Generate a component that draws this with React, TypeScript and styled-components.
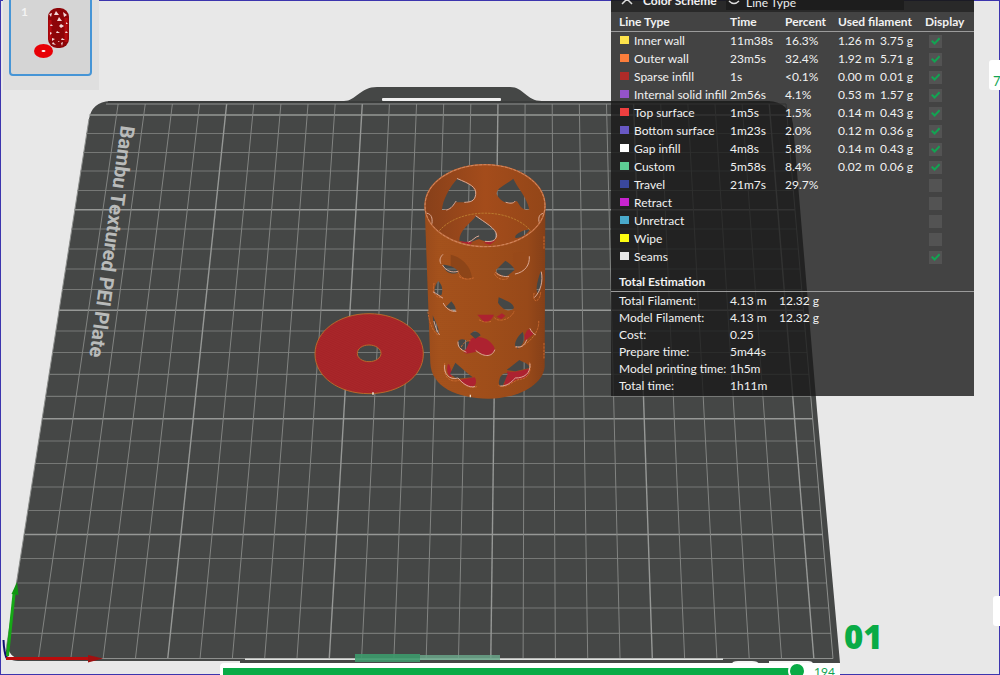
import React from "react";
import styled, { createGlobalStyle } from "styled-components";

const GlobalStyle = createGlobalStyle`
  *, *::before, *::after { box-sizing: border-box; }
  body { margin: 0; background: #e8e8e8; font-family: Lato, "Noto Sans", sans-serif; }
`;

const Page = styled.div`
  position: relative;
  display: grid;
  min-height: 100vh;
  overflow: hidden;
  background: #e8e8e8;
  &::after {
    content: "";
    position: absolute;
    inset: 0;
    border: 1px solid #3c35ae;
    pointer-events: none;
  }
`;

const Scene = styled.svg`
  grid-area: 1 / 1;
  display: block;
  width: 100%;
  height: 100%;
  min-height: 100vh;
`;

const Overlay = styled.div`
  grid-area: 1 / 1;
  display: grid;
  grid-template-rows: 1fr auto;
  z-index: 1;
`;

const Main = styled.main`
  display: flex;
  align-items: flex-start;
  padding-left: 3px;
`;

const PlateList = styled.nav`
  background: #dfdfdf;
  padding: 0 7px 14px 6px;
  margin-right: auto;
`;

const PlateButton = styled.button`
  display: block;
  width: 83px;
  height: 82px;
  margin-top: -6px;
  padding: 0;
  border: 2px solid #4695d6;
  border-radius: 4px;
  background: #d5d5d5;
`;

const PlateArt = styled.svg`
  display: block;
  width: 79px;
  height: 78px;
`;

const Panel = styled.section`
  width: 363px;
  margin-right: 15px;
  padding-bottom: 2px;
  background: rgba(25, 25, 25, 0.8);
  color: #f1f1f1;
  font-size: 12px;
`;

const PanelHeader = styled.header`
  display: flex;
  align-items: center;
  height: 24px;
  margin-top: -12px;
  padding-left: 9px;
  background: rgba(25, 25, 25, 0.6);
`;

const Collapse = styled.button`
  width: 14px;
  height: 24px;
  padding: 0;
  border: 0;
  background: none;
  color: #ddd;
`;

const SchemeLabel = styled.label`
  width: 83px;
  margin-left: 9px;
  font-weight: 700;
`;

const SelectWrap = styled.div`
  display: flex;
  align-items: center;
  width: 178px;
  height: 20px;
  padding: 4px 0 0 2px;
  background: #1d1d1d;
`;

const SchemeSelect = styled.select`
  flex: 1;
  appearance: none;
  padding: 0 0 0 6px;
  border: 0;
  background: none;
  color: #eee;
  font: inherit;
`;

const LineTable = styled.table`
  width: 100%;
  table-layout: fixed;
  border-collapse: separate;
  border-spacing: 0;
`;

const HeadCell = styled.th<{ $w: number; $first?: boolean }>`
  width: ${(p) => p.$w}px;
  height: 20px;
  padding: 0 0 0 ${(p) => (p.$first ? 8 : 0)}px;
  border-bottom: 1px solid #9b9b9b;
  text-align: left;
  font-weight: 700;
  line-height: 18px;
  white-space: nowrap;
`;

const Cell = styled.td`
  height: 18px;
  padding: 0;
  line-height: 18px;
  white-space: nowrap;
`;

const NameCell = styled.th`
  height: 18px;
  padding: 0 0 0 9px;
  text-align: left;
  font-weight: 400;
  line-height: 18px;
  white-space: nowrap;
`;

const Swatch = styled.span<{ $color: string }>`
  display: inline-block;
  width: 9px;
  height: 8px;
  margin-right: 5px;
  vertical-align: 1px;
  background: ${(p) => p.$color};
`;

const Amount = styled.span`
  display: inline-block;
  width: 42px;
`;

const Tick = styled.input`
  appearance: none;
  display: block;
  width: 13px;
  height: 13px;
  margin: 0 0 0 4px;
  background: #535353;
  &:checked::before {
    content: "";
    display: block;
    width: 13px;
    height: 13px;
    background: #12a452;
    clip-path: polygon(15% 52%, 27% 42%, 43% 58%, 76% 23%, 87% 35%, 43% 81%);
  }
`;

const TotalTitle = styled.h2`
  margin: 0;
  padding: 7px 0 0 8px;
  border-bottom: 1px solid #9b9b9b;
  font-size: 12px;
  line-height: 18px;
`;

const Totals = styled.dl`
  margin: 0;
  padding: 0 0 0 8px;
`;

const TotalRow = styled.div`
  display: grid;
  grid-template-columns: 111px 49px 1fr;
  line-height: 17px;
`;

const Term = styled.dt`
  white-space: nowrap;
`;

const Value = styled.dd`
  margin: 0;
`;

const Rail = styled.aside`
  display: flex;
  flex-direction: column;
  align-items: flex-end;
  justify-content: space-between;
  align-self: stretch;
  width: 11px;
  padding: 60px 0 37px;
`;

const RailTag = styled.div<{ $w: number }>`
  width: ${(p) => p.$w}px;
  height: 30px;
  padding-left: 4px;
  overflow: hidden;
  border-radius: 3px 0 0 3px;
  background: #fff;
  color: #12a452;
  font-size: 13px;
  line-height: 43px;
`;

const Footer = styled.footer`
  display: flex;
  align-items: flex-start;
  height: 12px;
  margin: 0 16% 0 22%;
  overflow: hidden;
  border-radius: 4px 0 0 0;
  background: #fff;
`;

const MoveSlider = styled.input`
  appearance: none;
  flex: 1;
  min-width: 0;
  height: 16px;
  margin: 0 8px 0 3px;
  background: linear-gradient(#09ab46, #09ab46) 0 5px / 99% 8px no-repeat;
  &::-webkit-slider-thumb {
    appearance: none;
    width: 18px;
    height: 18px;
    border: 2px solid #fff;
    border-radius: 50%;
    background: #09ab46;
  }
`;

const MoveCount = styled.output`
  width: 26px;
  color: #12a452;
  font-size: 12px;
  line-height: 18px;
`;

type Row = [string, string, string, string, string, string, boolean];
const rows: Row[] = [
  ["Inner wall", "#fde34b", "11m38s", "16.3%", "1.26 m", "3.75 g", true],
  ["Outer wall", "#fb7d3b", "23m5s", "32.4%", "1.92 m", "5.71 g", true],
  ["Sparse infill", "#ae2b28", "1s", "<0.1%", "0.00 m", "0.01 g", true],
  ["Internal solid infill", "#9453c8", "2m56s", "4.1%", "0.53 m", "1.57 g", true],
  ["Top surface", "#ee3f3f", "1m5s", "1.5%", "0.14 m", "0.43 g", true],
  ["Bottom surface", "#6858c4", "1m23s", "2.0%", "0.12 m", "0.36 g", true],
  ["Gap infill", "#ffffff", "4m8s", "5.8%", "0.14 m", "0.43 g", true],
  ["Custom", "#5dcd95", "5m58s", "8.4%", "0.02 m", "0.06 g", true],
  ["Travel", "#3a489d", "21m7s", "29.7%", "", "", false],
  ["Retract", "#c824cf", "", "", "", "", false],
  ["Unretract", "#49a9cb", "", "", "", "", false],
  ["Wipe", "#fcfc10", "", "", "", "", false],
  ["Seams", "#e6e6e6", "", "", "", "", true],
];

const totals: [string, string, string][] = [
  ["Total Filament:", "4.13 m", "12.32 g"],
  ["Model Filament:", "4.13 m", "12.32 g"],
  ["Cost:", "0.25", ""],
  ["Prepare time:", "5m44s", ""],
  ["Model printing time:", "1h5m", ""],
  ["Total time:", "1h11m", ""],
];

const gridYs = [
  115, 133.5, 152.5, 171, 190.5, 209.7, 229, 249, 269, 289.5, 310.3, 331, 352.5, 374.3, 396.3,
  418.7, 441, 463.5, 487, 510.5, 534.5, 558.5, 583, 608, 633.3,
];

/* Perspective grid of the build plate; every fifth line is stronger. */
function PlateGrid() {
  const columns = Array.from({ length: 25 }, (_, i) => i + 1);
  return (
    <g fill="none">
      {gridYs.map((y, i) => {
        const t = (y - 104) / 554;
        return (
          <path
            key={y}
            d={`M${91 - 85 * t} ${y}H${786 + 47 * t}`}
            strokeWidth={i % 5 === 0 ? 1.5 : 1.2}
            stroke={i % 5 === 0 ? "#969896" : "#767876"}
          />
        );
      })}
      {columns.map((n) => (
        <path
          key={n}
          d={`M${91 + 27.13 * n} 104L${6.3 + 32.3 * n} 658`}
          strokeWidth={n % 5 === 0 ? 1.4 : 1}
          stroke={n % 5 === 0 ? "#969896" : "#828482"}
        />
      ))}
      <path d="M106 104H786L833 658.500H20" stroke="#8d8f8d" />
    </g>
  );
}

const holes = [
  "M472 86C496 98 530 108 527 136C521 163 492 156 468 157C460 164 455 180 426 180C427 150 450 110 472 86Z",
  "M640 86C650 110 680 140 688 178C665 184 660 165 650 153C630 164 602 160 590 132C590 112 620 104 640 86Z",
  "M528 198C550 216 590 232 590 258C584 280 560 278 538 268C525 268 522 282 478 272C478 240 510 222 528 198Z",
  "M646 258C655 246 675 240 690 238C680 255 660 266 646 264Z",
  "M428 344C445 344 466 350 476 366C460 376 436 370 428 344Z",
  "M616 332C628 340 642 350 644 360C632 368 622 382 610 380C602 370 590 374 588 360Z",
  "M415 393C426 404 430 418 424 436L404 432C402 414 406 404 415 393Z",
  "M722 364C730 380 728 405 716 430C706 430 708 404 722 364Z",
  "M596 442C618 452 640 458 642 474C634 484 612 486 594 458Z",
  "M438 470L454 454C462 464 470 474 466 486Z",
  "M398 496C406 515 416 530 417 550C405 550 400 526 398 496Z",
  "M524 542C532 546 540 550 542 556L526 566L510 552Z",
  "M474 574C480 564 494 566 508 576L498 598C486 604 474 598 474 574Z",
  "M668 546C676 560 674 582 654 596C638 594 644 566 668 546Z",
  "M466 638C482 652 500 668 518 682L470 686L450 672Z",
  "M658 630C672 638 690 642 688 654L646 664L620 660Z",
  "M598 690C602 672 614 668 624 670L608 708C598 712 594 700 598 690Z",
];

const redPatches = [
  "M532 494H582C576 508 566 517 552 516Z",
  "M590 500L606 490L616 497L604 508Z",
  "M508 572C520 556 546 560 560 568C574 578 586 590 584 602C570 620 550 622 536 604C520 606 500 616 492 606Z",
  "M674 556C684 528 692 538 700 552L674 574Z",
  "M444 642C438 660 442 676 454 682L456 668L448 644Z",
  "M478 690L524 682C532 694 528 708 516 711C500 712 488 702 478 690Z",
  "M622 664C650 668 664 660 688 656C690 674 676 686 656 688C640 690 632 706 612 706Z",
  "M480 276C494 268 506 268 518 274L510 284Z",
  "M550 278L588 270L570 284Z",
];

const pale = [
  "M472 86C510 102 530 110 527 134C524 155 510 156 494 157",
  "M468 154C460 164 456 176 440 180",
  "M645 154C640 162 628 160 618 157",
  "M528 198C552 216 590 236 590 256C588 274 572 276 556 274",
  "M536 258C524 260 520 272 506 276",
  "M382 190C394 192 398 204 396 220",
  "M730 190C716 192 714 206 718 218",
  "M428 314C420 322 418 330 422 340",
  "M428 346C438 362 454 370 474 364",
  "M688 320C690 344 676 366 646 372",
  "M588 368C596 378 612 380 626 380",
  "M724 366C730 392 722 424 704 442",
  "M400 426C410 430 420 440 428 444",
  "M430 460C438 476 452 486 468 484",
  "M402 514C406 530 412 546 418 554",
  "M474 576C472 596 490 602 498 606",
  "M528 602C548 620 576 624 584 600",
  "M648 590C664 594 672 588 680 570",
  "M690 536C694 544 700 552 706 554",
  "M434 646C430 670 448 692 474 684C490 702 506 714 524 710",
  "M690 642C692 672 672 684 646 684C632 698 622 708 602 708",
];

const ochre = [
  "M478 380C494 390 508 388 520 384",
  "M474 366C478 374 484 384 496 386",
  "M584 372C590 386 608 392 622 386",
  "M584 504C600 520 636 504 642 484",
  "M538 510C550 516 560 518 574 514",
  "M384 486C388 520 400 548 416 556",
  "M402 400C396 426 408 446 424 442",
  "M702 430C696 462 720 458 722 426",
  "M484 600C478 592 496 570 510 572",
  "M646 592C660 600 720 560 716 512",
  "M434 640C428 684 452 700 480 690C492 708 514 716 530 710",
  "M596 706C616 720 640 690 660 688C690 684 694 658 688 636",
  "M732 260V296",
  "M732 580V624",
];

const discOutline =
  "M207 491C298 491 370 544 370 612C370 680 298 731 207 731S45 680 45 612C45 544 116 491 207 491ZM207 585C187 585 172 596 172 610S187 635 207 635S243 624 243 610S227 585 207 585Z";

function Disc() {
  return (
    <g fillRule="evenodd">
      <path d={discOutline} fill="#a52327" />
      <path d={discOutline} fill="url(#weave)" stroke="#b8682a" strokeWidth="3" />
      <path d="M219 727v7" stroke="#eadcc8" strokeWidth="5" />
    </g>
  );
}

function Cylinder() {
  return (
    <g>
      <g mask="url(#cutouts)">
        <path
          d="M374 167C374 100 450 43 555 43S736 100 736 167L734 650C730 700 660 746 565 746S394 710 391 640Z"
          fill="url(#wall)"
        />
        <ellipse cx="555" cy="167" rx="181" ry="124" fill="url(#inside)" />
        <path
          d="M374 167L391 640C394 710 470 746 565 746S730 700 734 650L736 167C736 240 660 291 555 291S374 240 374 167Z"
          fill="url(#layers)"
        />
        <path d="M452 314C480 320 512 344 516 382C500 392 484 384 474 366L452 350Z" fill="#8d4518" />
        <path d="M640 310C660 304 684 306 688 322C688 350 672 368 648 372L640 356Z" fill="#984919" />
        {redPatches.map((d) => (
          <path key={d} d={d} fill="#ad2230" />
        ))}
      </g>
      <path d="M418 242C480 172 630 172 692 242" fill="none" stroke="#b9782d" strokeWidth="3" strokeDasharray="7 3" />
      <g fill="none" strokeLinecap="round">
        {ochre.map((d) => (
          <path key={d} d={d} stroke="#c8682f" strokeWidth="3" strokeDasharray="5 5" />
        ))}
        {pale.map((d) => (
          <path key={d} d={d} stroke="#dba994" strokeWidth="3" />
        ))}
      </g>
      <ellipse cx="555" cy="167" rx="180" ry="123" fill="none" stroke="#bf6a3c" strokeWidth="4" />
      <ellipse cx="555" cy="167" rx="180" ry="123" fill="none" stroke="#dd9a74" strokeWidth="2" strokeDasharray="8 5" />
      <path d="M511 734v8" stroke="#eadcc8" strokeWidth="4" />
    </g>
  );
}

function Viewport() {
  return (
    <Scene viewBox="0 0 1000 675" preserveAspectRatio="xMinYMin slice" role="img" aria-label="Sliced model on build plate">
      <defs>
        <linearGradient id="wall" x1="0" x2="1">
          <stop offset="0" stopColor="#9a4b1b" />
          <stop offset=".12" stopColor="#a5521c" />
          <stop offset=".5" stopColor="#a04e1a" />
          <stop offset=".85" stopColor="#984919" />
          <stop offset="1" stopColor="#843f18" />
        </linearGradient>
        <linearGradient id="inside" x1="0" x2="1">
          <stop offset="0" stopColor="#87401a" />
          <stop offset=".5" stopColor="#a44c1b" />
          <stop offset="1" stopColor="#934618" />
        </linearGradient>
        <pattern id="layers" width="6" height="6" patternUnits="userSpaceOnUse">
          <path d="M0 1H6" stroke="#8a4316" strokeOpacity=".3" />
        </pattern>
        <pattern id="weave" width="6" height="6" patternUnits="userSpaceOnUse" patternTransform="rotate(25)">
          <path d="M0 1H6" stroke="#c03a3c" strokeOpacity=".5" />
        </pattern>
        <mask id="cutouts" maskUnits="userSpaceOnUse" x="300" y="0" width="500" height="800">
          <rect x="300" width="500" height="800" fill="#fff" />
          {holes.map((d) => (
            <path key={d} d={d} />
          ))}
        </mask>
      </defs>
      <path
        d="M89 119Q92 102 110 101H344C356 101 360 87 377 87H510C524 87 526 101 542 101H768Q790 102 793 124L817 410L840 663H240V661H18Q5 660 6 650Z"
        fill="#454746"
      />
      <path d="M108 102H770" stroke="#373938" strokeWidth="1.500" />
      <path d="M89 119L6 650" stroke="#8d8f8d" />
      <rect x="382" y="98" width="119" height="3" rx="1" fill="#f0f0f0" />
      <PlateGrid />
      <text
        transform="translate(121 125) rotate(97.800)"
        fill="#b9bbba"
        fontFamily="Roboto, sans-serif"
        fontSize="20"
        fontWeight="700"
      >
        Bambu Textured PEI Plate
      </text>
      <g transform="translate(300 150) scale(.33333)">
        <Disc />
        <Cylinder />
      </g>
      <path d="M8 648Q10 656 17 658H8Z" fill="#f2f2f2" />
      <path d="M3.500 640Q4 652 6.500 658" stroke="#101070" strokeWidth="2" fill="none" />
      <path d="M7.500 656L14 594" stroke="#16a816" strokeWidth="3" />
      <path d="M11.500 594L17 582L18.500 595Z" fill="#0f960f" />
      <path d="M6 658.500H90" stroke="#b90c0c" strokeWidth="3" />
      <path d="M88 655L103 658.500L88 662.500Z" fill="#a01010" />
      <path d="M245 659.300H723" stroke="#dfe1df" strokeWidth="1.500" />
      <path d="M732 664Q732 661 738 661H752Q758 661 759 664ZM769 661H808Q813 661 813 664H769Z" fill="#f4f4f4" />
      <path d="M355 654h65v8h-65z" fill="#3c9a6c" fillOpacity=".9" />
      <path d="M420 655h80v5h-80z" fill="#6aa68a" fillOpacity=".85" />
      <text x="844" y="649" fill="#09ab46" fontFamily="'Open Sans', sans-serif" fontSize="33" fontWeight="800">
        01
      </text>
    </Scene>
  );
}

function PlateThumbnail() {
  return (
    <PlateArt viewBox="11 -4 79 78" aria-hidden="true">
      <text x="21" y="16" fill="#f3f3f3" fontFamily="Lato, sans-serif" fontSize="12" fontWeight="700">
        1
      </text>
      <rect x="48" y="8" width="21" height="40" rx="9" fill="#8d0508" />
      <path d="M50 20V40M66 18V42" stroke="#b60a0f" strokeWidth="3" />
      <path
        d="M56 11l3 4h-5zM63 12l4 3-3 2zM49 14l3-1-1 4zM59 17l3 4h-5zM51 24l2 2h-3zM61 24l3 2-3 2-2-2zM66 22l2 2h-2zM57 31l3 2h-4zM50 32l2 1-2 2zM66 31l2 2h-3zM52 38l3 1-3 2zM62 38l3 2h-4zM53 42l3 3-4-1zM61 43l2-1-1 4zM58 41l2 1h-2z"
        fill="#f4d9d9"
      />
      <ellipse cx="43.500" cy="51" rx="9.500" ry="7" fill="#e80006" />
      <ellipse cx="43.500" cy="51" rx="2" ry="1" fill="#fff" />
    </PlateArt>
  );
}

export default function App() {
  return (
    <Page>
      <GlobalStyle />
      <Viewport />
      <Overlay>
        <Main>
          <PlateList aria-label="Plates">
            <PlateButton aria-label="Plate 1">
              <PlateThumbnail />
            </PlateButton>
          </PlateList>
          <Panel>
            <PanelHeader>
              <Collapse aria-label="Collapse">
                <svg width="14" height="24" viewBox="0 0 14 24" fill="none" stroke="currentColor" strokeWidth="1.500">
                  <path d="M2 16L7 11L12 16" />
                </svg>
              </Collapse>
              <SchemeLabel htmlFor="scheme">Color Scheme</SchemeLabel>
              <SelectWrap>
                <svg width="12" height="12" viewBox="0 0 12 12" fill="none" stroke="#ddd" strokeWidth="1.500">
                  <path d="M1 5Q6 10 11 5" />
                </svg>
                <SchemeSelect id="scheme" defaultValue="Line Type">
                  <option>Line Type</option>
                </SchemeSelect>
              </SelectWrap>
            </PanelHeader>
            <LineTable>
              <thead>
                <tr>
                  <HeadCell $w={119} $first>Line Type</HeadCell>
                  <HeadCell $w={55}>Time</HeadCell>
                  <HeadCell $w={53}>Percent</HeadCell>
                  <HeadCell $w={87}>Used filament</HeadCell>
                  <HeadCell $w={49}>Display</HeadCell>
                </tr>
              </thead>
              <tbody>
                {rows.map(([name, color, time, percent, meters, grams, shown]) => (
                  <tr key={name}>
                    <NameCell scope="row">
                      <Swatch $color={color} />
                      {name}
                    </NameCell>
                    <Cell>{time}</Cell>
                    <Cell>{percent}</Cell>
                    <Cell>
                      {meters && <Amount>{meters}</Amount>}
                      {grams}
                    </Cell>
                    <Cell>
                      <Tick type="checkbox" defaultChecked={shown} aria-label={`Display ${name}`} />
                    </Cell>
                  </tr>
                ))}
              </tbody>
            </LineTable>
            <TotalTitle>Total Estimation</TotalTitle>
            <Totals>
              {totals.map(([term, first, second]) => (
                <TotalRow key={term}>
                  <Term>{term}</Term>
                  <Value>{first}</Value>
                  {second && <Value>{second}</Value>}
                </TotalRow>
              ))}
            </Totals>
          </Panel>
          <Rail>
            <RailTag $w={11}>7</RailTag>
            <RailTag $w={7} />
          </Rail>
        </Main>
        <Footer>
          <MoveSlider type="range" min={0} max={194} defaultValue={194} aria-label="Move" />
          <MoveCount>194</MoveCount>
        </Footer>
      </Overlay>
    </Page>
  );
}
